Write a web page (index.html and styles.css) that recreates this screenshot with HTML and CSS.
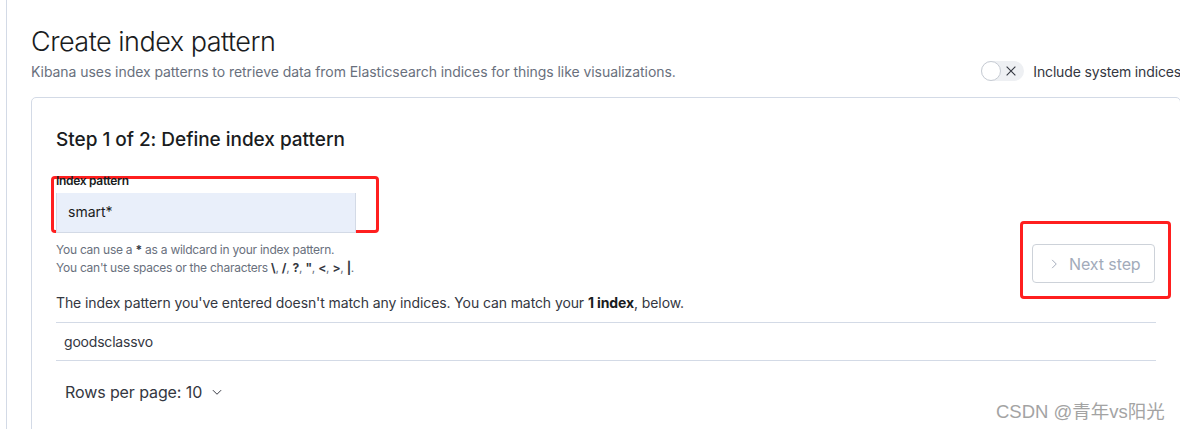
FILE: index.html
```html
<!DOCTYPE html>
<html lang="en">
<head>
<meta charset="utf-8">
<title>Create index pattern</title>
<link rel="stylesheet" href="styles.css">
</head>
<body>
<div class="frame">
  <div class="page">
    <div class="header">
      <div class="header-text">
        <h1 class="title">Create index pattern</h1>
        <p class="subtitle">Kibana uses index patterns to retrieve data from Elasticsearch indices for things like visualizations.</p>
      </div>
      <div class="switch-wrap">
        <span class="switch">
          <span class="knob"></span>
          <svg class="switch-x" width="14" height="14" viewBox="0 0 16 16"><path d="M3 3 L13 13 M13 3 L3 13" stroke="#343741" stroke-width="1.3" fill="none"/></svg>
        </span>
        <span class="switch-label">Include system indices</span>
      </div>
    </div>
    <div class="card">
      <h2 class="step">Step 1 of 2: Define index pattern</h2>
      <div class="form-row">
        <div class="field">
          <div class="mark mark-field">
            <label class="field-label">Index pattern</label>
            <div class="input">smart*</div>
          </div>
          <div class="help">
            <div>You can use a <b>*</b> as a wildcard in your index pattern.</div>
            <div>You can't use spaces or the characters <b>\</b>, <b>/</b>, <b>?</b>, <b>"</b>, <b>&lt;</b>, <b>&gt;</b>, <b>|</b>.</div>
          </div>
        </div>
        <div class="mark mark-btn">
          <button class="next-btn" disabled>
            <svg width="12" height="12" viewBox="0 0 16 16"><path d="M5.5 2.5 L11 8 L5.5 13.5" stroke="#A2ABBA" stroke-width="1.3" fill="none"/></svg>
            <span>Next step</span>
          </button>
        </div>
      </div>
      <p class="status">The index pattern you've entered doesn't match any indices. You can match your <b>1 index</b>, below.</p>
      <div class="table">
        <div class="table-row">goodsclassvo</div>
      </div>
      <div class="pager">
        <span>Rows per page: 10</span>
        <svg width="12" height="12" viewBox="0 0 16 16"><path d="M2.5 5.5 L8 11 L13.5 5.5" stroke="#343741" stroke-width="1.3" fill="none"/></svg>
      </div>
    </div>
  </div>
  <div class="watermark">CSDN @青年vs阳光</div>
</div>
</body>
</html>
```
FILE: styles.css
```css
* { box-sizing: border-box; }
html, body { margin: 0; padding: 0; background: #fff; }
body {
  font-family: Inter, "Noto Sans CJK SC", sans-serif;
  color: #343741;
  width: 1180px;
  height: 429px;
  overflow: hidden;
}
.frame {
  position: relative;
  height: 429px;
  margin-left: 6px;
  border-left: 1px solid #D3DAE6;
  padding-left: 24px;
}
.page { width: 1150px; padding-top: 26px; }
.header { display: flex; justify-content: space-between; align-items: flex-end; }
.title {
  margin: 0;
  font-size: 27px;
  font-weight: 300;
  line-height: 32px;
  color: #1a1c21;
  letter-spacing: -0.5px;
}
.subtitle {
  margin: 4px 0 0;
  font-size: 14px;
  line-height: 20px;
  color: #69707D;
  letter-spacing: -0.06px;
}
.switch-wrap { display: flex; align-items: center; gap: 9px; height: 22px; }
.switch {
  position: relative;
  width: 43px;
  height: 20px;
  border-radius: 10px;
  background: #EEF0F3;
  display: flex;
  align-items: center;
  justify-content: flex-end;
  padding-right: 6px;
}
.knob {
  position: absolute;
  left: 0; top: 0;
  width: 20px; height: 20px;
  border-radius: 50%;
  background: #fff;
  border: 1px solid #C6CBD3;
}
.switch-label { font-size: 14px; color: #343741; letter-spacing: -0.15px; }
.card {
  margin-top: 15px;
  border: 1px solid #D3DAE6;
  border-radius: 5px;
  padding: 30px 24px 0;
  height: 340px;
}
.step {
  margin: 0;
  font-size: 19px;
  font-weight: 500;
  line-height: 24px;
  color: #1a1c21;
  letter-spacing: -0.03px;
}
.form-row { display: flex; justify-content: space-between; align-items: flex-start; margin-top: 24px; }
.mark { border: 3px solid #FF1F1F; border-radius: 4px; }
.mark-field { width: 328px; height: 57px; margin-left: -5px; padding-left: 2px; }
.field-label {
  display: block;
  font-size: 12px;
  font-weight: 600;
  line-height: 14px;
  height: 14px;
  margin-top: -5px;
  color: #1a1c21;
  letter-spacing: -0.3px;
}
.input {
  width: 300px;
  height: 40px;
  margin-top: 5px;
  background: #E9EFFA;
  border: 1px solid #D3DAE6;
  border-top: none;
  font-size: 14px;
  line-height: 38px;
  padding-left: 11px;
  color: #1a1c21;
}
.help {
  margin-top: 8px;
  font-size: 12px;
  line-height: 18px;
  color: #69707D;
  letter-spacing: -0.25px;
}
.help b { color: #343741; }
.mark-btn {
  width: 151px;
  height: 78px;
  margin-top: 45px;
  margin-right: -15px;
  margin-bottom: -40px;
  display: flex;
  align-items: flex-start;
  padding-top: 20px;
  padding-left: 9px;
}
.next-btn {
  width: 123px;
  height: 39px;
  border: 1px solid #CDD2D9;
  border-radius: 4px;
  background: #fff;
  display: flex;
  align-items: center;
  gap: 9px;
  padding-left: 15px;
  font-family: inherit;
  font-size: 16px;
  color: #A2ABBA;
  letter-spacing: -0.1px;
}
.status {
  margin: 16px 0 0;
  font-size: 14px;
  line-height: 20px;
  color: #343741;
  letter-spacing: -0.1px;
}
.status b { color: #1a1c21; }
.table { margin-top: 9px; border-top: 1px solid #D3DAE6; border-bottom: 1px solid #D3DAE6; }
.table-row { height: 37px; line-height: 37px; font-size: 14px; padding-left: 8px; letter-spacing: -0.2px; }
.pager {
  margin-top: 19px;
  padding-left: 9px;
  display: flex;
  align-items: center;
  gap: 9px;
  font-size: 16px;
  line-height: 24px;
  letter-spacing: -0.1px;
}
.watermark {
  position: absolute;
  left: 989px;
  top: 397px;
  font-family: "Liberation Sans", "Noto Sans CJK SC", sans-serif;
  font-size: 18.5px;
  color: #9a9a9a;
  opacity: 0.9;
}
```
